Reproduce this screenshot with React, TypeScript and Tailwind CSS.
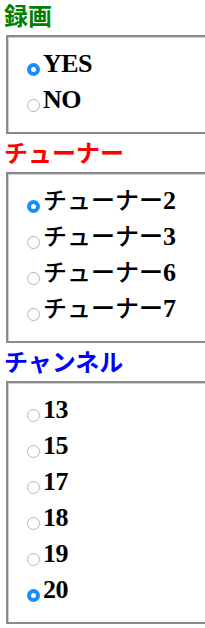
import React from "react";

type Group = { title: string; color: string; options: string[]; checked: number };

const groups: Group[] = [
  { title: "録画", color: "text-[#008000]", options: ["YES", "NO"], checked: 0 },
  {
    title: "チューナー",
    color: "text-[#ff0000]",
    options: ["チューナー2", "チューナー3", "チューナー6", "チューナー7"],
    checked: 0,
  },
  {
    title: "チャンネル",
    color: "text-[#0000ff]",
    options: ["13", "15", "17", "18", "19", "20"],
    checked: 5,
  },
];

function Radio({ on }: { on: boolean }) {
  return on ? (
    <span className="flex h-[13px] w-[13px] items-center justify-center rounded-full bg-[#1a8cff]">
      <span className="block h-[5px] w-[5px] rounded-full bg-white" />
    </span>
  ) : (
    <span className="block h-[13px] w-[13px] rounded-full border border-[#b5b5b5] bg-white" />
  );
}

function Label({ text }: { text: string }) {
  const parts = text.match(/[A-Za-z0-9]+|[^A-Za-z0-9]+/g) || [];
  return (
    <span className="ml-[3px] whitespace-nowrap leading-[36px] text-black">
      {parts.map((p, i) =>
        /[A-Za-z0-9]/.test(p) ? (
          <span key={i} className="text-[26px] font-bold tracking-[-0.5px]">
            {p}
          </span>
        ) : (
          <span key={i} className="text-[24px] font-medium">
            {p}
          </span>
        )
      )}
    </span>
  );
}

export default function App() {
  return (
    <div
      className="w-[205px] overflow-hidden bg-white pb-[4px]"
      style={{ fontFamily: '"Liberation Serif", "Noto Sans CJK JP", serif' }}
    >
      {groups.map((g, gi) => (
        <div key={g.title} className={gi === 0 ? "" : "mt-[3px]"}>
          <div className={`ml-[4px] h-[35px] text-[24px] leading-[35px] font-bold ${g.color}`}>
            {g.title}
          </div>
          <div className="ml-[6px] w-[260px] border-2 border-[#8a8a8a] pt-[9px] pb-[14px] pl-[19px] shadow-[inset_1px_1px_0_#d0d0d0]">
            {g.options.map((o, i) => (
              <div key={o} className="flex h-[36px] items-start">
                <span className="mt-[17px] block shrink-0">
                  <Radio on={i === g.checked} />
                </span>
                <Label text={o} />
              </div>
            ))}
          </div>
        </div>
      ))}
    </div>
  );
}
